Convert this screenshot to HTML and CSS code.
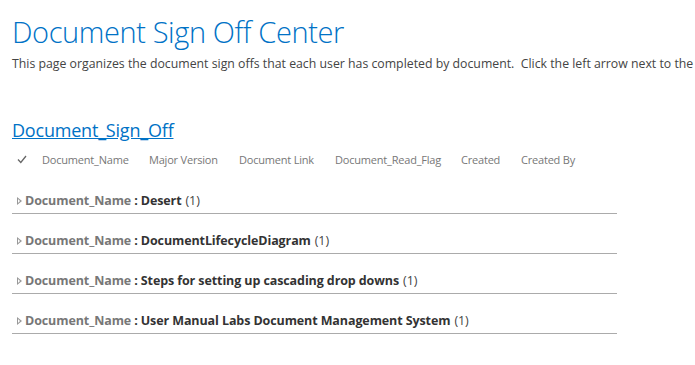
FILE: index.html
```html
<!DOCTYPE html>
<html lang="en">
<head>
    <meta charset="UTF-8">
    <meta name="viewport" content="width=device-width, initial-scale=1.0">
    <title>Document Sign Off Center</title>
    <link rel="stylesheet" href="styles.css">
</head>
<body>
    <div class="page">
        <!-- page title -->
        <h1 class="page-title">Document Sign Off Center</h1>
        <p class="page-desc">This page organizes the document sign offs that each user has completed by document.&nbsp; Click the left arrow next to the</p>

        <!-- list web part -->
        <div class="webpart">
            <h2 class="webpart-title"><a href="#">Document_Sign_Off</a></h2>

            <div class="list-header">
                <span class="col col-check">
                    <svg width="10" height="9" viewBox="0 0 10 9"><path d="M1 4.5 L3.8 7.5 L9 1" fill="none" stroke="#666" stroke-width="1.3"/></svg>
                </span>
                <span class="col col-name">Document_Name</span>
                <span class="col col-version">Major Version</span>
                <span class="col col-link">Document Link</span>
                <span class="col col-flag">Document_Read_Flag</span>
                <span class="col col-created">Created</span>
                <span class="col col-by">Created By</span>
            </div>

            <div class="groups">
                <div class="group-row">
                    <span class="arrow"></span>
                    <span class="field">Document_Name</span>
                    <span class="value">: Desert</span>
                    <span class="count">(1)</span>
                </div>
                <div class="group-row">
                    <span class="arrow"></span>
                    <span class="field">Document_Name</span>
                    <span class="value">: DocumentLifecycleDiagram</span>
                    <span class="count">(1)</span>
                </div>
                <div class="group-row">
                    <span class="arrow"></span>
                    <span class="field">Document_Name</span>
                    <span class="value">: Steps for setting up cascading drop downs</span>
                    <span class="count">(1)</span>
                </div>
                <div class="group-row">
                    <span class="arrow"></span>
                    <span class="field">Document_Name</span>
                    <span class="value">: User Manual Labs Document Management System</span>
                    <span class="count">(1)</span>
                </div>
            </div>
        </div>
    </div>
</body>
</html>
```

FILE: styles.css
```css
* {
    margin: 0;
    padding: 0;
    box-sizing: border-box;
}

body {
    font-family: "Open Sans", "Noto Sans", Arial, sans-serif;
    background: #fff;
    color: #444;
    overflow: hidden;
}

.page {
    padding: 12px 0 0 12px;
}

.page-title {
    font-weight: 300;
    font-size: 29px;
    line-height: 40px;
    color: #0072c6;
    letter-spacing: -0.4px;
}

.page-desc {
    margin-top: 4px;
    font-size: 12.3px;
    line-height: 16px;
    color: #444;
    white-space: nowrap;
}

.webpart {
    margin-top: 46px;
}

.webpart-title {
    font-weight: 400;
    font-size: 18px;
    line-height: 24px;
}

.webpart-title a {
    color: #0072c6;
    text-decoration: underline;
    letter-spacing: -0.2px;
}

.list-header {
    display: flex;
    align-items: center;
    height: 29px;
    margin-top: 3px;
    font-size: 11px;
    color: #777;
    letter-spacing: -0.2px;
}

.col-check {
    width: 30px;
    padding-left: 5px;
    display: flex;
}

.col-name { width: 107px; }
.col-version { width: 90px; }
.col-link { width: 96px; }
.col-flag { width: 126px; }
.col-created { width: 60px; }

.groups {
    width: 605px;
}

.group-row {
    display: flex;
    align-items: flex-end;
    height: 40px;
    padding-bottom: 4px;
    border-bottom: 1px solid #ababab;
    font-size: 12.5px;
    line-height: 16px;
    letter-spacing: -0.1px;
}

.arrow {
    width: 0;
    height: 0;
    margin: 0 3px 4px 5px;
    border-top: 4px solid transparent;
    border-bottom: 4px solid transparent;
    border-left: 5px solid #999;
    position: relative;
}

.arrow::after {
    content: '';
    position: absolute;
    left: -4px;
    top: -2px;
    border-top: 2px solid transparent;
    border-bottom: 2px solid transparent;
    border-left: 2px solid #fff;
}

.field {
    font-weight: 700;
    color: #777;
}

.value {
    font-weight: 700;
    color: #333;
    margin-left: 3px;
}

.count {
    margin-left: 4px;
    color: #444;
}
```
